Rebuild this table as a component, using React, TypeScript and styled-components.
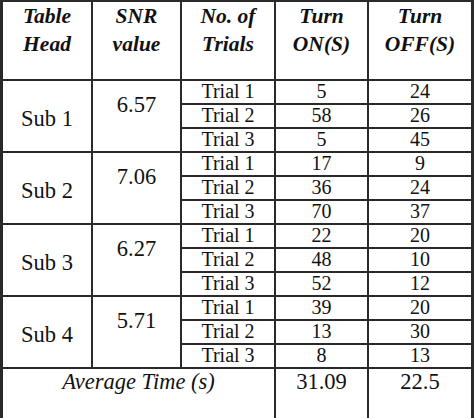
import React from "react";
import styled, { createGlobalStyle } from "styled-components";

const Global = createGlobalStyle`
  html, body { margin: 0; padding: 0; background: #ffffff; }
  body { width: 474px; height: 418px; overflow: hidden; }
`;

const Grid = styled.div`
  display: grid;
  grid-template-columns: 88px 87px 92px 91px 102px;
  grid-template-rows: 77px repeat(12, 22px) 60px;
  gap: 2px;
  padding: 2px 3px 3px 3px;
  width: 474px;
  box-sizing: border-box;
  background: #2a2a2a;
  font-family: "Liberation Serif", "Times New Roman", serif;
  color: #111;
`;

const Cell = styled.div`
  background: #ffffff;
  text-align: center;
  white-space: nowrap;
`;

const HeadCell = styled(Cell)`
  font-size: 21.5px;
  font-weight: bold;
  font-style: italic;
  line-height: 28px;
`;

const SubCell = styled(Cell)`
  grid-row: span 3;
  display: flex;
  align-items: center;
  justify-content: center;
  padding-top: 5px;
  font-size: 22.5px;
`;

const SnrCell = styled(Cell)`
  grid-row: span 3;
  padding-top: 11px;
  font-size: 22.5px;
`;

const RowCell = styled(Cell)<{ $first?: boolean }>`
  grid-column: ${(p) => (p.$first ? "3" : "auto")};
  font-size: 20px;
  line-height: 20px;
`;

const AvgLabel = styled(Cell)<{ $span?: number }>`
  grid-column: span ${(p) => p.$span ?? 1};
  font-size: 22.5px;
  font-style: ${(p) => (p.$span ? "italic" : "normal")};
`;

const data = [
  { sub: "Sub 1", snr: "6.57", rows: [["5", "24"], ["58", "26"], ["5", "45"]] },
  { sub: "Sub 2", snr: "7.06", rows: [["17", "9"], ["36", "24"], ["70", "37"]] },
  { sub: "Sub 3", snr: "6.27", rows: [["22", "20"], ["48", "10"], ["52", "12"]] },
  { sub: "Sub 4", snr: "5.71", rows: [["39", "20"], ["13", "30"], ["8", "13"]] },
];

export default function App() {
  return (
    <>
      <Global />
      <Grid>
        <HeadCell>Table<br />Head</HeadCell>
        <HeadCell>SNR<br />value</HeadCell>
        <HeadCell>No. of<br />Trials</HeadCell>
        <HeadCell>Turn<br />ON(S)</HeadCell>
        <HeadCell>Turn<br />OFF(S)</HeadCell>
        {data.map((d) => (
          <React.Fragment key={d.sub}>
            <SubCell>{d.sub}</SubCell>
            <SnrCell>{d.snr}</SnrCell>
            {d.rows.map((r, i) => (
              <React.Fragment key={i}>
                <RowCell $first>Trial {i + 1}</RowCell>
                <RowCell>{r[0]}</RowCell>
                <RowCell>{r[1]}</RowCell>
              </React.Fragment>
            ))}
          </React.Fragment>
        ))}
        <AvgLabel $span={3}>Average Time (s)</AvgLabel>
        <AvgLabel>31.09</AvgLabel>
        <AvgLabel>22.5</AvgLabel>
      </Grid>
    </>
  );
}
